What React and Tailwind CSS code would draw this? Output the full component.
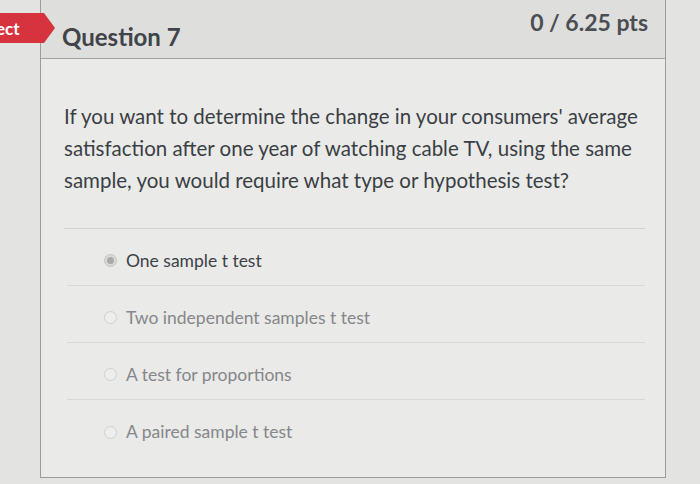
export default function App() {
  const answers = [
    { label: "One sample t test", selected: true },
    { label: "Two independent samples t test" },
    { label: "A test for proportions" },
    { label: "A paired sample t test" },
  ];

  return (
    <div
      className="relative h-[484px] w-[700px] overflow-hidden bg-[#e3e3e1]"
      style={{ fontFamily: "Lato, 'Open Sans', sans-serif" }}
    >
      <div className="ml-[40px] w-[626px] border border-t-0 border-[#9c9c9a] bg-[#eaeae8]">
        {/* header */}
        <div className="flex h-[59px] items-start justify-between border-b border-[#a2a2a0] bg-[#dededc] pl-[21px] pr-[17px]">
          <div className="mt-[25px] text-[24px] font-bold leading-none text-[#40444a]">Question 7</div>
          <div className="mt-[11px] text-[23px] font-bold leading-none text-[#4a4e53]">0 / 6.25 pts</div>
        </div>

        {/* question body */}
        <div className="pb-[20px] pl-[23px] pr-[20px] pt-[41px]">
          <p className="w-[600px] text-[20.5px] leading-[32px] text-[#3a3f45]">
            If you want to determine the change in your consumers' average satisfaction after one year of watching
            cable TV, using the same sample, you would require what type or hypothesis test?
          </p>
          <div className="mt-[32px] border-t border-[#d2d2d0]" />
          <div className="ml-[3px]">
            {answers.map((a, i) => (
              <div
                key={a.label}
                className={`flex h-[57px] items-center gap-[9px] pl-[37px] pt-[7px] ${
                  i < answers.length - 1 ? "border-b border-[#d8d8d6]" : ""
                }`}
              >
                {a.selected ? (
                  <span className="flex h-[13px] w-[13px] items-center justify-center rounded-full border border-[#c4c4c2] bg-[#d9d9d7]">
                    <span className="h-[7px] w-[7px] rounded-full bg-[#a9a9a7]" />
                  </span>
                ) : (
                  <span className="h-[13px] w-[13px] rounded-full border border-[#d0d0ce] bg-[#eeeeec]" />
                )}
                <span
                  className={`text-[17.5px] leading-none ${a.selected ? "text-[#3d4147]" : "text-[#85878a]"}`}
                >
                  {a.label}
                </span>
              </div>
            ))}
          </div>
        </div>
      </div>

      {/* status flag running in from the left edge, over the card border */}
      <div className="absolute left-0 top-[13px] flex h-[30px] items-center">
        <div className="flex h-full w-[44px] items-center overflow-hidden bg-[#d6333f]">
          <span className="-ml-[4px] whitespace-nowrap text-[17px] font-bold leading-none text-white">ect</span>
        </div>
        <div className="h-0 w-0 border-y-[15px] border-l-[11px] border-y-transparent border-l-[#d6333f]" />
      </div>
    </div>
  );
}
